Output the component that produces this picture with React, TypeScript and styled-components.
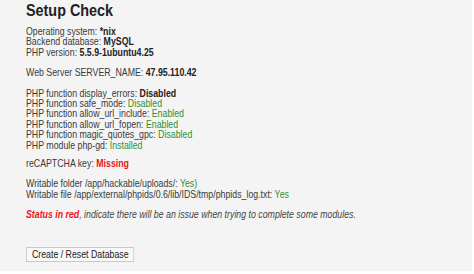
import React from 'react'
import styled, { createGlobalStyle } from 'styled-components'

const GlobalStyle = createGlobalStyle`
  html, body {
    margin: 0;
    padding: 0;
    background: #ffffff;
  }
`

const font = `'Liberation Sans', Arial, sans-serif`

const Page = styled.div`
  width: 472px;
  height: 271px;
  background: #f4f4f4;
  box-sizing: border-box;
  padding: 0 0 0 26px;
  overflow: hidden;
  font-family: ${font};
  font-size: 10.4px;
  line-height: 10.4px;
  color: #3a3a3a;
`

// the screenshot's type is narrow, as if squeezed sideways
const Content = styled.div`
  transform: scaleX(0.845);
  transform-origin: left top;
`

const Title = styled.h1`
  margin: 0;
  padding-top: 1px;
  font-size: 17px;
  line-height: 20px;
  font-weight: bold;
  color: #222;
`

const Line = styled.div`
  white-space: nowrap;
`

const Strong = styled.b`
  color: #222;
`

const Status = styled.span<{ $tone: 'ok' | 'bad' }>`
  color: ${p => (p.$tone === 'ok' ? '#2f8f2f' : '#e8141a')};
  font-weight: ${p => (p.$tone === 'bad' ? 'bold' : 'normal')};
`

const Note = styled.i`
  color: #444;
`

const Button = styled.button`
  display: block;
  margin-top: 26px;
  font-family: ${font};
  font-size: 10.4px;
  color: #222;
  background: #f8f8f8;
  border: 1px solid #c9c9c9;
  border-radius: 0;
  padding: 0 6px;
  height: 15px;
  line-height: 13px;
`

const Gap = styled.div<{ $h: number }>`
  height: ${p => p.$h}px;
`

export default function App() {
  return (
    <>
      <GlobalStyle />
      <Page>
        <Content>
          <Title>Setup Check</Title>
          <Gap $h={6} />
          <Line>Operating system: <Strong>*nix</Strong></Line>
          <Line>Backend database: <Strong>MySQL</Strong></Line>
          <Line>PHP version: <Strong>5.5.9-1ubuntu4.25</Strong></Line>
          <Gap $h={10} />
          <Line>Web Server SERVER_NAME: <Strong>47.95.110.42</Strong></Line>
          <Gap $h={10} />
          <Line>PHP function display_errors: <Strong>Disabled</Strong></Line>
          <Line>PHP function safe_mode: <Status $tone="ok">Disabled</Status></Line>
          <Line>PHP function allow_url_include: <Status $tone="ok">Enabled</Status></Line>
          <Line>PHP function allow_url_fopen: <Status $tone="ok">Enabled</Status></Line>
          <Line>PHP function magic_quotes_gpc: <Status $tone="ok">Disabled</Status></Line>
          <Line>PHP module php-gd: <Status $tone="ok">Installed</Status></Line>
          <Gap $h={8} />
          <Line>reCAPTCHA key: <Status $tone="bad">Missing</Status></Line>
          <Gap $h={10} />
          <Line>Writable folder /app/hackable/uploads/: <Status $tone="ok">Yes)</Status></Line>
          <Line>Writable file /app/external/phpids/0.6/lib/IDS/tmp/phpids_log.txt: <Status $tone="ok">Yes</Status></Line>
          <Gap $h={10} />
          <Line><Note><Status $tone="bad">Status in red</Status>, indicate there will be an issue when trying to complete some modules.</Note></Line>
          <Button>Create / Reset Database</Button>
        </Content>
      </Page>
    </>
  )
}
